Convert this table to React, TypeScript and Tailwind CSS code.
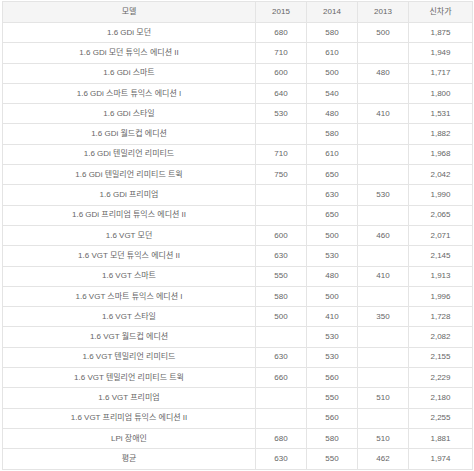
const rows: string[][] = [
  ["1.6 GDi 모던", "680", "580", "500", "1,875"],
  ["1.6 GDi 모던 튜익스 에디션 II", "710", "610", "", "1,949"],
  ["1.6 GDi 스마트", "600", "500", "480", "1,717"],
  ["1.6 GDi 스마트 튜익스 에디션 I", "640", "540", "", "1,800"],
  ["1.6 GDi 스타일", "530", "480", "410", "1,531"],
  ["1.6 GDi 월드컵 에디션", "", "580", "", "1,882"],
  ["1.6 GDi 텐밀리언 리미티드", "710", "610", "", "1,968"],
  ["1.6 GDi 텐밀리언 리미티드 트윅", "750", "650", "", "2,042"],
  ["1.6 GDi 프리미엄", "", "630", "530", "1,990"],
  ["1.6 GDi 프리미엄 튜익스 에디션 II", "", "650", "", "2,065"],
  ["1.6 VGT 모던", "600", "500", "460", "2,071"],
  ["1.6 VGT 모던 튜익스 에디션 II", "630", "530", "", "2,145"],
  ["1.6 VGT 스마트", "550", "480", "410", "1,913"],
  ["1.6 VGT 스마트 튜익스 에디션 I", "580", "500", "", "1,996"],
  ["1.6 VGT 스타일", "500", "410", "350", "1,728"],
  ["1.6 VGT 월드컵 에디션", "", "530", "", "2,082"],
  ["1.6 VGT 텐밀리언 리미티드", "630", "530", "", "2,155"],
  ["1.6 VGT 텐밀리언 리미티드 트윅", "660", "560", "", "2,229"],
  ["1.6 VGT 프리미엄", "", "550", "510", "2,180"],
  ["1.6 VGT 프리미엄 튜익스 에디션 II", "", "560", "", "2,255"],
  ["LPi 장애인", "680", "580", "510", "1,881"],
  ["평균", "630", "550", "462", "1,974"],
];

const headers = ["모델", "2015", "2014", "2013", "신차가"];

export default function App() {
  return (
    <div className="min-h-screen bg-white pl-[2px] pt-[1px] font-['Liberation_Sans','Noto_Sans_CJK_KR',sans-serif] text-[8px] text-[#666]">
      <table className="w-[470px] table-fixed border-collapse text-center">
        <colgroup>
          <col className="w-[253px]" />
          <col className="w-[51px]" />
          <col className="w-[51px]" />
          <col className="w-[51px]" />
          <col className="w-[64px]" />
        </colgroup>
        <thead>
          <tr className="h-[21px] bg-[#f5f5f5]">
            {headers.map((h) => (
              <th key={h} className="border border-[#e4e4e4] p-0 font-normal">
                {h}
              </th>
            ))}
          </tr>
        </thead>
        <tbody>
          {rows.map((r, i) => (
            <tr key={i} className="h-[20.3px]">
              {r.map((c, j) => (
                <td key={j} className="border border-[#e4e4e4] p-0 whitespace-nowrap">
                  {c}
                </td>
              ))}
            </tr>
          ))}
        </tbody>
      </table>
    </div>
  );
}
